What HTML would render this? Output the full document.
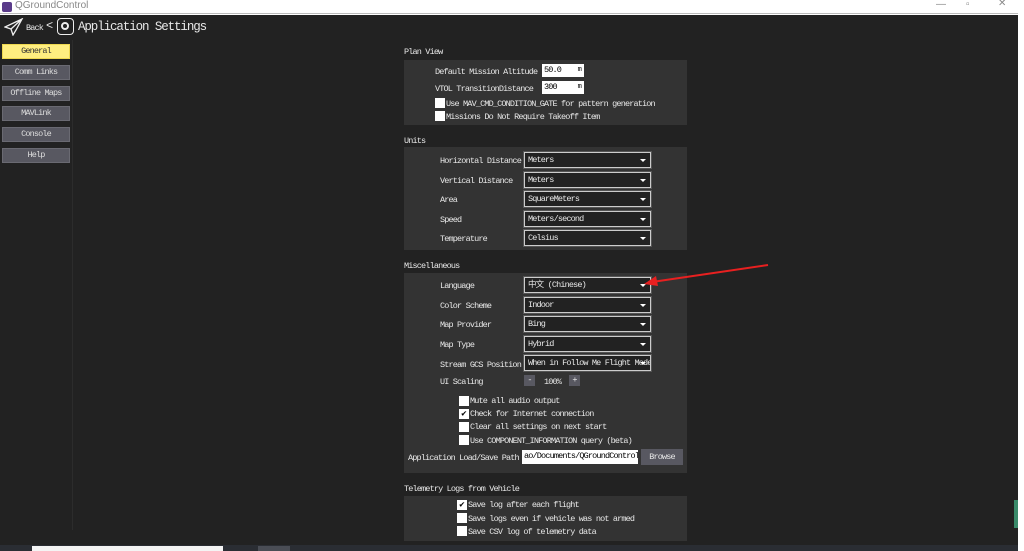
<!DOCTYPE html><html><head><meta charset="utf-8"><style>
*{margin:0;padding:0;box-sizing:border-box}
body{width:1024px;height:551px;overflow:hidden;background:#fff;position:relative;font-family:"Liberation Mono","Noto Sans CJK SC",monospace;font-size:8.5px;letter-spacing:-0.84px;color:#e8e8e8}
.a{position:absolute}
.tb{left:0;top:0;width:1018px;height:14px;background:#fff;border-bottom:1px solid #bbb;font-family:"Liberation Sans",sans-serif;color:#888;font-size:10px;letter-spacing:0}
.main{left:0;top:15px;width:1018px;height:530px;background:#222}
.side{left:72px;top:40px;width:1px;height:490px;background:#2c2c2c}
.btn{left:2px;width:68px;height:15px;background:#585861;border:1px solid #6a6a72;text-align:center;line-height:13px;color:#ddd}
.lbl{color:#e8e8e8}
.pan{left:404px;width:283px;background:#333}
.dd{left:524px;width:127px;height:16px;background:#222;border:1px solid #ccc;outline:1px solid #555;line-height:14px;padding-left:3px;white-space:nowrap;overflow:hidden}
.dd:after{content:"";position:absolute;right:4px;top:6px;border-left:3px solid transparent;border-right:3px solid transparent;border-top:3px solid #fff}
.cb{width:10px;height:10px;background:#fff;color:#000;font-size:9px;line-height:10px;text-align:center;letter-spacing:0}
.in{background:#fff;color:#000;height:13px;line-height:13px;padding-left:2px}
</style></head><body>
<div class="a tb"><div class="a" style="left:2px;top:2px;width:10px;height:10px;background:#5a3b8a;border-radius:2px"></div><span class="a" style="left:15px;top:0">QGroundControl</span>
<span class="a" style="left:936px;top:-1px">—</span><span class="a" style="left:966px;top:-1px">▫</span><span class="a" style="left:998px;top:-2px">✕</span></div>
<div class="a main"></div>
<div class="a side"></div>
<svg class="a" style="left:4px;top:18px" width="20" height="18"><path d="M18 1 L1 9 L7 11 L9 17 L12 12 Z M7 11 L18 1" fill="none" stroke="#eee" stroke-width="1.3"/></svg>
<span class="a" style="left:26px;top:23px">Back</span><span class="a" style="left:46px;top:19px;font-size:12px">&lt;</span>
<div class="a" style="left:57px;top:18px;width:17px;height:17px;border:1.5px solid #eee;border-radius:4px"><div class="a" style="left:3px;top:3px;width:8px;height:8px;border-radius:50%;border:2px solid #eee"></div></div>
<span class="a" style="left:78px;top:20px;font-size:12.5px;letter-spacing:-1.1px">Application Settings</span>
<div class="a btn" style="top:44px;background:#ffee80;border-color:#eed850;color:#333">General</div>
<div class="a btn" style="top:65px">Comm Links</div>
<div class="a btn" style="top:86px">Offline Maps</div>
<div class="a btn" style="top:106px">MAVLink</div>
<div class="a btn" style="top:127px">Console</div>
<div class="a btn" style="top:148px">Help</div>

<span class="a lbl" style="left:404px;top:47px">Plan View</span>
<div class="a pan" style="top:60px;height:65px"></div>
<span class="a" style="left:435px;top:67px">Default Mission Altitude</span>
<div class="a in" style="left:542px;top:64px;width:42px">50.0<span style="position:absolute;right:3px;font-size:7px">m</span></div>
<span class="a" style="left:435px;top:84px">VTOL TransitionDistance</span>
<div class="a in" style="left:542px;top:81px;width:42px">300<span style="position:absolute;right:3px;font-size:7px">m</span></div>
<div class="a cb" style="left:435px;top:98px"></div><span class="a" style="left:446px;top:99px">Use MAV_CMD_CONDITION_GATE for pattern generation</span>
<div class="a cb" style="left:435px;top:111px"></div><span class="a" style="left:446px;top:112px">Missions Do Not Require Takeoff Item</span>

<span class="a lbl" style="left:404px;top:136px">Units</span>
<div class="a pan" style="top:147px;height:103px"></div>
<span class="a" style="left:440px;top:156px">Horizontal Distance</span><div class="a dd" style="top:152px">Meters</div>
<span class="a" style="left:440px;top:176px">Vertical Distance</span><div class="a dd" style="top:172px">Meters</div>
<span class="a" style="left:440px;top:195px">Area</span><div class="a dd" style="top:191px">SquareMeters</div>
<span class="a" style="left:440px;top:215px">Speed</span><div class="a dd" style="top:211px">Meters/second</div>
<span class="a" style="left:440px;top:234px">Temperature</span><div class="a dd" style="top:230px">Celsius</div>

<span class="a lbl" style="left:404px;top:261px">Miscellaneous</span>
<div class="a pan" style="top:273px;height:200px"></div>
<span class="a" style="left:440px;top:281px">Language</span><div class="a dd" style="top:277px">中文 (Chinese)</div>
<span class="a" style="left:440px;top:301px">Color Scheme</span><div class="a dd" style="top:297px">Indoor</div>
<span class="a" style="left:440px;top:320px">Map Provider</span><div class="a dd" style="top:316px">Bing</div>
<span class="a" style="left:440px;top:340px">Map Type</span><div class="a dd" style="top:336px">Hybrid</div>
<span class="a" style="left:440px;top:360px">Stream GCS Position</span><div class="a dd" style="top:355px">When in Follow Me Flight Mode</div>
<span class="a" style="left:440px;top:377px">UI Scaling</span>
<div class="a" style="left:524px;top:375px;width:11px;height:11px;background:#585861;text-align:center;line-height:11px">-</div>
<span class="a" style="left:544px;top:377px">100%</span>
<div class="a" style="left:569px;top:375px;width:11px;height:11px;background:#585861;text-align:center;line-height:11px">+</div>
<div class="a cb" style="left:459px;top:396px"></div><span class="a" style="left:470px;top:396px">Mute all audio output</span>
<div class="a cb" style="left:459px;top:409px">✔</div><span class="a" style="left:470px;top:409px">Check for Internet connection</span>
<div class="a cb" style="left:459px;top:422px"></div><span class="a" style="left:470px;top:422px">Clear all settings on next start</span>
<div class="a cb" style="left:459px;top:435px"></div><span class="a" style="left:470px;top:436px">Use COMPONENT_INFORMATION query (beta)</span>
<span class="a" style="left:408px;top:453px">Application Load/Save Path</span>
<div class="a in" style="left:522px;top:450px;width:116px;height:14px;overflow:hidden;white-space:nowrap">ao/Documents/QGroundControl</div>
<div class="a" style="left:641px;top:449px;width:42px;height:16px;background:#585861;text-align:center;line-height:16px">Browse</div>

<span class="a lbl" style="left:404px;top:484px">Telemetry Logs from Vehicle</span>
<div class="a pan" style="top:496px;height:45px"></div>
<div class="a cb" style="left:457px;top:500px">✔</div><span class="a" style="left:468px;top:500px">Save log after each flight</span>
<div class="a cb" style="left:457px;top:513px"></div><span class="a" style="left:468px;top:514px">Save logs even if vehicle was not armed</span>
<div class="a cb" style="left:457px;top:526px"></div><span class="a" style="left:468px;top:527px">Save CSV log of telemetry data</span>

<svg class="a" style="left:640px;top:262px" width="130" height="26"><line x1="128" y1="3" x2="12" y2="20" stroke="#e82020" stroke-width="2"/><polygon points="4,22 16,14 18,24" fill="#e82020"/></svg>

<div class="a" style="left:1014px;top:500px;width:4px;height:28px;background:#3a8a6a"></div>
<div class="a" style="left:0;top:545px;width:1018px;height:6px;background:#2a2d33"></div>
<div class="a" style="left:32px;top:546px;width:191px;height:5px;background:#f4f4f4"></div>
<div class="a" style="left:258px;top:546px;width:32px;height:5px;background:#4a4d55"></div>
</body></html>
